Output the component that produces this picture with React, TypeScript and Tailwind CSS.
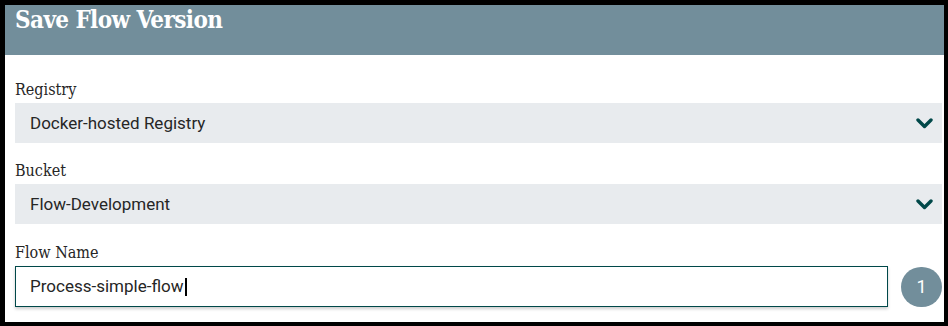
const slab = { fontFamily: '"DejaVu Serif Condensed", "DejaVu Serif", serif' };

function Label({ children }: { children: React.ReactNode }) {
  return (
    <div className="h-5 leading-5 text-[16px] text-[#262626] mb-[3px]" style={slab}>
      {children}
    </div>
  );
}

function Chevron() {
  return (
    <svg width="17" height="11" viewBox="0 0 17 11" fill="none">
      <path
        d="M2 2l6.5 6.5L15 2"
        stroke="#004849"
        strokeWidth="3.4"
        strokeLinecap="round"
        strokeLinejoin="round"
      />
    </svg>
  );
}

function Combo({ value }: { value: string }) {
  return (
    <div className="h-10 bg-[#e8ebee] flex items-center justify-between pl-[15px] pr-[9px]">
      <span className="text-[17px] text-[#262626] font-['Roboto',sans-serif] pt-px">{value}</span>
      <Chevron />
    </div>
  );
}

export default function App() {
  return (
    <div className="w-[948px] h-[326px] bg-black pt-[5px] pl-[5px]">
      <div className="w-[939px] h-[317px] bg-white flex flex-col">
        <div className="h-[50px] bg-[#728e9b] px-[10px]">
          <h1
            className="text-white text-[24px] font-bold leading-[30px] tracking-[-0.6px]"
            style={slab}
          >
            Save Flow Version
          </h1>
        </div>

        <div className="pl-[10px] pr-[2px] pt-[25px]">
          <Label>Registry</Label>
          <Combo value="Docker-hosted Registry" />

          <div className="mt-[18px]">
            <Label>Bucket</Label>
            <Combo value="Flow-Development" />
          </div>

          <div className="mt-[19px]">
            <Label>Flow Name</Label>
            <div className="flex items-center gap-[13px]">
              <div className="flex-1 h-[41px] border border-[#004849] shadow-[0_2px_3px_rgba(0,0,0,0.2)] flex items-center pl-[14px]">
                <span className="text-[17px] text-[#262626] font-['Roboto',sans-serif]">
                  Process-simple-flow
                </span>
                <span className="w-[2px] h-[18px] bg-black ml-px" />
              </div>
              <div className="w-[41px] h-10 rounded-full bg-[#728e9b] flex items-center justify-center text-white text-[18px] font-['Roboto',sans-serif]">
                1
              </div>
            </div>
          </div>
        </div>
      </div>
    </div>
  );
}
